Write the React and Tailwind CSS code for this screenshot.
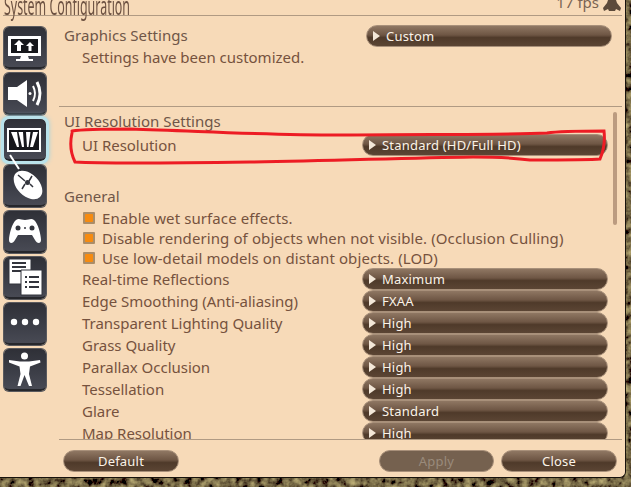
import React from 'react';

const font = { fontFamily: '"Noto Sans", sans-serif' };

const labelCls = 'text-[15px] leading-none tracking-[-0.02px] text-[#76523e] whitespace-nowrap';
const checkCls = 'text-[15px] leading-none tracking-[0.1px] text-[#76523e] whitespace-nowrap';
const headCls = 'text-[15px] leading-none tracking-[0.05px] text-[#6f5648] whitespace-nowrap';
const pillBg = 'bg-[linear-gradient(#8f7763_0%,#6e5644_45%,#4f3a2a_58%,#5b4534_100%)]';

const Pill = ({ label, className = '' }) => (
  <div className={`flex items-center h-[22px] rounded-full border border-[#a8907a] ${pillBg} pl-[6px] ${className}`}>
    <span className="w-0 h-0 border-y-[5px] border-y-transparent border-l-[7px] border-l-[#f3e7d8] mr-[6px]" />
    <span className="text-[13px] leading-none tracking-[0.2px] text-[#fbf3e8]">{label}</span>
  </div>
);

const Row = ({ label, value }) => (
  <div className="flex items-center justify-between h-[22px] pl-[18px] pr-[9px] shrink-0">
    <span className={labelCls}>{label}</span>
    <Pill label={value} className="w-[246px]" />
  </div>
);

const Check = ({ label }) => (
  <div className="flex items-center h-[20px] pl-[19px] shrink-0">
    <span className="flex items-center justify-center w-[12px] h-[12px] bg-[#ab8d68] rounded-[1px] mr-[7px]">
      <span className="w-[8px] h-[8px] bg-[#f68b10] rounded-[1px]" />
    </span>
    <span className={checkCls}>{label}</span>
  </div>
);

const FootBtn = ({ label, disabled, className = '' }) => (
  <button className={`h-[22px] rounded-full border border-[#a8907a] text-[13px] leading-none tracking-[0.2px] ${disabled ? 'bg-[#75614f] text-[#9a8b7c]' : `${pillBg} text-[#fbf3e8]`} ${className}`}>
    {label}
  </button>
);

const Tab = ({ active, children }) => (
  <div className={`flex items-center justify-center w-[42px] h-[42px] rounded-[5px] bg-gradient-to-b from-[#2f3037] via-[#3a3c45] to-[#484a54] border-b-2 border-[#26272c] shadow-[0_0_0_1px_#5a5a5e] ${active ? 'outline-3 outline-[#b9e2ea] shadow-[0_0_5px_3px_#9fd4e2]' : ''}`}>
    <svg width="42" height="42" viewBox="0 0 42 42" fill="#fff" className="overflow-visible">{children}</svg>
  </div>
);

const tabs = [
  <>
    <rect x="5.500" y="11.500" width="30" height="17" fill="#16171b" stroke="#fff" strokeWidth="3" />
    <path d="M17 30h7l1 3h4v2H12v-2h4z" />
    <path d="M15 14l5 5h-3v6h-4v-6h-3zM26 16l4 4h-2.500v5h-3v-5H22z" />
  </>,
  <>
    <path d="M4 15h9l10-7v27l-10-7H4z" />
    <circle cx="26" cy="21.500" r="1.500" />
    <path d="M29 14q4 7.500 0 15" fill="none" stroke="#fff" strokeWidth="2" />
    <path d="M33 10q6 11.500 0 23" fill="none" stroke="#fff" strokeWidth="3" />
  </>,
  <>
    <rect x="4" y="11" width="32" height="22" fill="#16171b" stroke="#fff" strokeWidth="2" />
    <path d="M7 14h6l2 15h-2zM14.500 14H19l1 15h-2zM22 14h4.500l-2 15H23zM29 14h5l-5 15h-3z" />
  </>,
  <>
    <path d="M6-9l9 14" fill="none" stroke="#fff" strokeWidth="2" />
    <ellipse cx="24" cy="21" rx="17" ry="11" transform="rotate(45 24 21)" fill="#fff" />
    <path d="M14 11l7 6M26 20l3 3M28 12l-3 5M21 20l-3 5" fill="none" stroke="#33353d" strokeWidth="1.500" />
    <circle cx="23.500" cy="18.500" r="2.500" fill="#33353d" />
  </>,
  <>
    <path d="M12 10c3-2 5 0 9 0s6-2 9 0c4 3 7 15 7 20 0 4-4 4-6 0l-3-5H14l-3 5c-2 4-6 4-6 0 0-5 3-17 7-20z" />
    <circle cx="14" cy="18" r="2.500" fill="#33353d" />
    <circle cx="28" cy="18" r="2.500" fill="#33353d" />
    <circle cx="21" cy="18" r="1" fill="#33353d" />
  </>,
  <>
    <path d="M5 3h22v25H5z" stroke="#33353d" strokeWidth="1" />
    <path d="M8 6h14v2H8zM8 10h14v2H8zM8 14h9v2H8z" fill="#33353d" />
    <path d="M17 14h21v25H17z" stroke="#33353d" strokeWidth="1" />
    <path d="M21 20h2v2h-2zM25 20h10v2H25zM21 25h2v2h-2zM25 25h10v2H25zM21 30h2v2h-2zM25 30h10v2H25z" fill="#33353d" />
  </>,
  <>
    <circle cx="10" cy="20" r="3.200" />
    <circle cx="21" cy="20" r="3.200" />
    <circle cx="32" cy="20" r="3.200" />
  </>,
  <>
    <circle cx="20.500" cy="8" r="3.500" />
    <path d="M5 12l11 1.500h9L36 12l.5 2.500-10.500 4-1 7.500 3 12h-3l-4.500-11L16.500 38h-3l3-12-1-7.500L5 14.500z" />
  </>,
];

const App = () => (
  <div className="relative w-[631px] h-[487px] overflow-hidden bg-[#2f2614]" style={font}>
    {/* game scene behind the window */}
    <svg className="absolute inset-0" width="631" height="487">
      <filter id="scene">
        <feTurbulence type="fractalNoise" baseFrequency="0.14" numOctaves="3" seed="4" />
        <feColorMatrix values="0.800 0 0 0 -0.220  0.700 0 0 0 -0.210  0.300 0 0 0 -0.090  0 0 0 0 1" />
      </filter>
      <rect width="631" height="487" filter="url(#scene)" />
    </svg>

    <div className="relative flex flex-col w-[626px] h-[478px] bg-[#f7dab8] rounded-br-[6px] border-r border-b border-[#17120c]">
      {/* title bar, cut off by the screenshot */}
      <div className="relative flex items-end justify-between h-[16px] ml-[3px] mr-[3px] border-b border-[#b09a83] shrink-0">
        <span className="origin-left scale-x-[0.497] text-[25px] leading-none text-[#6d5242] whitespace-nowrap mb-[-3px] pl-[2px]">System Configuration</span>
        <div className="flex items-end">
          <span className="text-[15px] leading-none text-[#7a6352] mb-[5px] mr-[3px]">17 fps</span>
          <svg width="20" height="12" viewBox="0 0 20 12" className="mb-[3px]" fill="#5c4a3b">
            <path d="M6 0h8l1 3 4 5-1 3-4-2-1 2h-6l-1-2-4 2-1-3 4-5z" />
          </svg>
        </div>
      </div>

      <div className="flex flex-1 min-h-0">
        <div className="flex flex-col gap-[4px] w-[50px] pl-[4px] pt-[11px] shrink-0">
          {tabs.map((t, i) => (
            <Tab key={i} active={i === 2}>{t}</Tab>
          ))}
        </div>

        <div className="flex flex-col flex-1 min-w-0 pl-[9px] pr-[3px]">
          <div className="h-[91px] border-b border-[#b09a83] pl-[5px] pt-[9px] shrink-0">
            <div className="flex items-center justify-between h-[22px] pr-[10px]">
              <span className={`${headCls} -mt-[2px]`}>Graphics Settings</span>
              <Pill label="Custom" className="w-[246px]" />
            </div>
            <p className={`${labelCls} pl-[18px] mt-[3px]`}>Settings have been customized.</p>
          </div>

          <div className="relative flex-1 min-h-0 overflow-hidden">
            <div className="flex flex-col pl-[5px] pr-[5px]">
              <div className={`h-[22px] flex items-end shrink-0 ${headCls}`}>UI Resolution Settings</div>
              <div className="mt-[5px]"><Row label="UI Resolution" value="Standard (HD/Full HD)" /></div>
              <div className={`h-[30px] mt-[18px] flex items-end shrink-0 ${headCls}`}>General</div>
              <div className="h-[4px] shrink-0" />
              <Check label="Enable wet surface effects." />
              <Check label="Disable rendering of objects when not visible. (Occlusion Culling)" />
              <Check label="Use low-detail models on distant objects. (LOD)" />
              <Row label="Real-time Reflections" value="Maximum" />
              <Row label="Edge Smoothing (Anti-aliasing)" value="FXAA" />
              <Row label="Transparent Lighting Quality" value="High" />
              <Row label="Grass Quality" value="High" />
              <Row label="Parallax Occlusion" value="High" />
              <Row label="Tessellation" value="High" />
              <Row label="Glare" value="Standard" />
              <Row label="Map Resolution" value="High" />
            </div>
          </div>

          <div className="flex items-start justify-between h-[38px] border-t border-[#b09a83] pt-[10px] pl-[4px] pr-[5px] shrink-0">
            <FootBtn label="Default" className="w-[116px]" />
            <div className="flex gap-[7px]">
              <FootBtn label="Apply" disabled className="w-[115px]" />
              <FootBtn label="Close" className="w-[116px]" />
            </div>
          </div>
        </div>
      </div>

      {/* scrollbar thumb */}
      <div className="absolute left-[613px] top-[112px] w-[4px] h-[113px] rounded-full bg-[#bb9b80]" />
    </div>

    {/* red marker annotation */}
    <svg className="absolute inset-0 pointer-events-none" width="631" height="487" fill="none">
      <path
        d="M72 133C70 142 70 152 75 162C110 164 180 163 250 162C330 161 400 158 473 157C495 157 515 158 530 160C555 160 590 160 600 159C604 150 605 140 604 131C580 131 560 131 547 133C500 135 420 134 340 135C260 135 200 131 130 129C105 129 85 129 72 131"
        stroke="#ed1c24"
        strokeWidth="3"
        strokeLinecap="round"
      />
    </svg>
  </div>
);

export default App;
